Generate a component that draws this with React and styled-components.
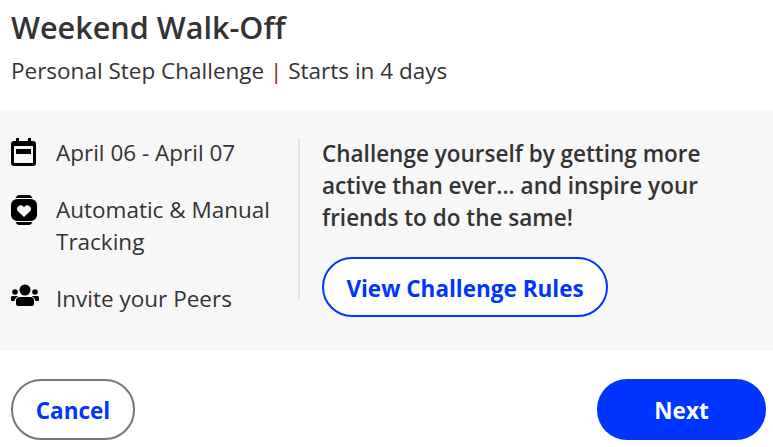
import React from "react";
import styled, { createGlobalStyle } from "styled-components";

const GlobalStyle = createGlobalStyle`
  html, body {
    margin: 0;
    padding: 0;
    background: #fff;
    font-family: "Open Sans", sans-serif;
    color: #333;
  }
  * {
    box-sizing: border-box;
  }
`;

const CalendarIcon = () => (
  <svg width="25" height="28" viewBox="0 0 25 28" fill="#000">
    <path
      fillRule="evenodd"
      d="M5 0h3v3h9V0h3v3h2a3 3 0 0 1 3 3v19a3 3 0 0 1-3 3H3a3 3 0 0 1-3-3V6a3 3 0 0 1 3-3h2V0zM3 8v16.500a.5.5 0 0 0 .5.5h18a.5.5 0 0 0 .5-.5V8H3z"
    />
    <rect x="5" y="11" width="15" height="5" />
  </svg>
);

const WatchIcon = () => (
  <svg width="26" height="31" viewBox="0 0 26 31" fill="#000">
    <path d="M7 0h10c1.500 0 3 1.500 3.500 3h-17C4 1.500 5.500 0 7 0zM3.500 27h17c-.5 1.500-2 3-3.500 3H7c-1.500 0-3-1.500-3.500-3z" transform="translate(1 0)" />
    <path
      fillRule="evenodd"
      d="M6 4h14a6 6 0 0 1 6 6v10a6 6 0 0 1-6 6H6a6 6 0 0 1-6-6V10a6 6 0 0 1 6-6zm7 18l-5.800-5.400a3.500 3.500 0 0 1 0-5 3.700 3.700 0 0 1 5.200 0l.6.600.6-.6a3.700 3.700 0 0 1 5.200 0 3.500 3.500 0 0 1 0 5z"
    />
  </svg>
);

const PeersIcon = () => (
  <svg width="28" height="22" viewBox="0 0 28 22" fill="#000">
    <circle cx="14" cy="6" r="5.500" />
    <circle cx="4" cy="8" r="2.800" />
    <circle cx="24" cy="8" r="2.800" />
    <path d="M8.500 13h11c2 0 3.500 1.500 3.500 3.500V20a2 2 0 0 1-2 2H7a2 2 0 0 1-2-2v-3.500C5 14.500 6.500 13 8.500 13z" />
    <path d="M1.500 12h4.300c.7 0 1.200.3 1.200.5C5 13.500 3.700 15 3.500 17H1a1 1 0 0 1-1-1v-2.500c0-.8.700-1.500 1.500-1.500zM22.200 12h4.300c.8 0 1.500.7 1.500 1.500V16a1 1 0 0 1-1 1h-2.500c-.2-2-1.500-3.500-3.500-4.500 0-.2.500-.5 1.200-.5z" />
  </svg>
);

export default function App() {
  return (
    <Page>
      <GlobalStyle />
      <Header>
        <Title>Weekend Walk-Off</Title>
        <Subtitle>
          Personal Step Challenge <Divider>|</Divider> Starts in 4 days
        </Subtitle>
      </Header>
      <Panel>
        <Features>
          <Feature>
            <IconSlot>
              <CalendarIcon />
            </IconSlot>
            <FeatureText>April 06 - April 07</FeatureText>
          </Feature>
          <Feature>
            <IconSlot>
              <WatchIcon />
            </IconSlot>
            <FeatureText>Automatic &amp; Manual Tracking</FeatureText>
          </Feature>
          <Feature>
            <IconSlot>
              <PeersIcon />
            </IconSlot>
            <FeatureText>Invite your Peers</FeatureText>
          </Feature>
        </Features>
        <Details>
          <Pitch>
            Challenge yourself by getting more active than ever... and inspire
            your friends to do the same!
          </Pitch>
          <RulesButton>View Challenge Rules</RulesButton>
        </Details>
      </Panel>
      <Footer>
        <CancelButton>Cancel</CancelButton>
        <NextButton>Next</NextButton>
      </Footer>
    </Page>
  );
}

const Page = styled.div`
  width: 773px;
  height: 447px;
  overflow: hidden;
`;

const Header = styled.header`
  height: 110px;
  padding: 7px 11px 0;
`;

const Title = styled.h1`
  margin: 0;
  font-size: 30.600px;
  line-height: 40px;
  font-weight: 600;
  color: #333;
`;

const Subtitle = styled.p`
  margin: 9px 0 0;
  font-size: 22.500px;
  line-height: 30px;
  color: #333;
`;

const Divider = styled.span`
  color: #8a1c1c;
`;

const Panel = styled.section`
  height: 241px;
  background: #f7f7f7;
  display: flex;
  padding-top: 28px;
`;

const Features = styled.ul`
  width: 300px;
  height: 162px;
  margin: 0;
  padding: 0 0 0 11px;
  list-style: none;
  border-right: 2px solid #e4e4e4;
`;

const Feature = styled.li`
  display: flex;
  align-items: flex-start;
  margin-bottom: 26px;
`;

const IconSlot = styled.span`
  width: 45px;
  flex: none;
  display: flex;
`;

const FeatureText = styled.span`
  margin-top: -1px;
  font-size: 22.500px;
  line-height: 32px;
  color: #333;
`;

const Details = styled.div`
  padding: 0 0 0 22px;
  width: 420px;
`;

const Pitch = styled.p`
  margin: 0;
  font-size: 22.500px;
  line-height: 32px;
  font-weight: 600;
  color: #333;
`;

const Pill = styled.button`
  font-family: "Open Sans", sans-serif;
  font-size: 22.500px;
  font-weight: 700;
  border-radius: 30px;
  cursor: pointer;
`;

const RulesButton = styled(Pill)`
  display: block;
  margin-top: 23px;
  height: 60px;
  width: 286px;
  padding: 2px 0 0;
  background: #fff;
  color: #0035ff;
  border: 2px solid #0035ff;
`;

const Footer = styled.footer`
  display: flex;
  justify-content: space-between;
  padding: 28px 7px 0 11px;
`;

const CancelButton = styled(Pill)`
  width: 124px;
  height: 61px;
  padding: 2px 0 0;
  background: #fff;
  color: #0035ff;
  border: 2px solid #767676;
`;

const NextButton = styled(Pill)`
  width: 169px;
  height: 61px;
  padding: 2px 0 0;
  background: #0035ff;
  color: #fff;
  border: none;
`;
